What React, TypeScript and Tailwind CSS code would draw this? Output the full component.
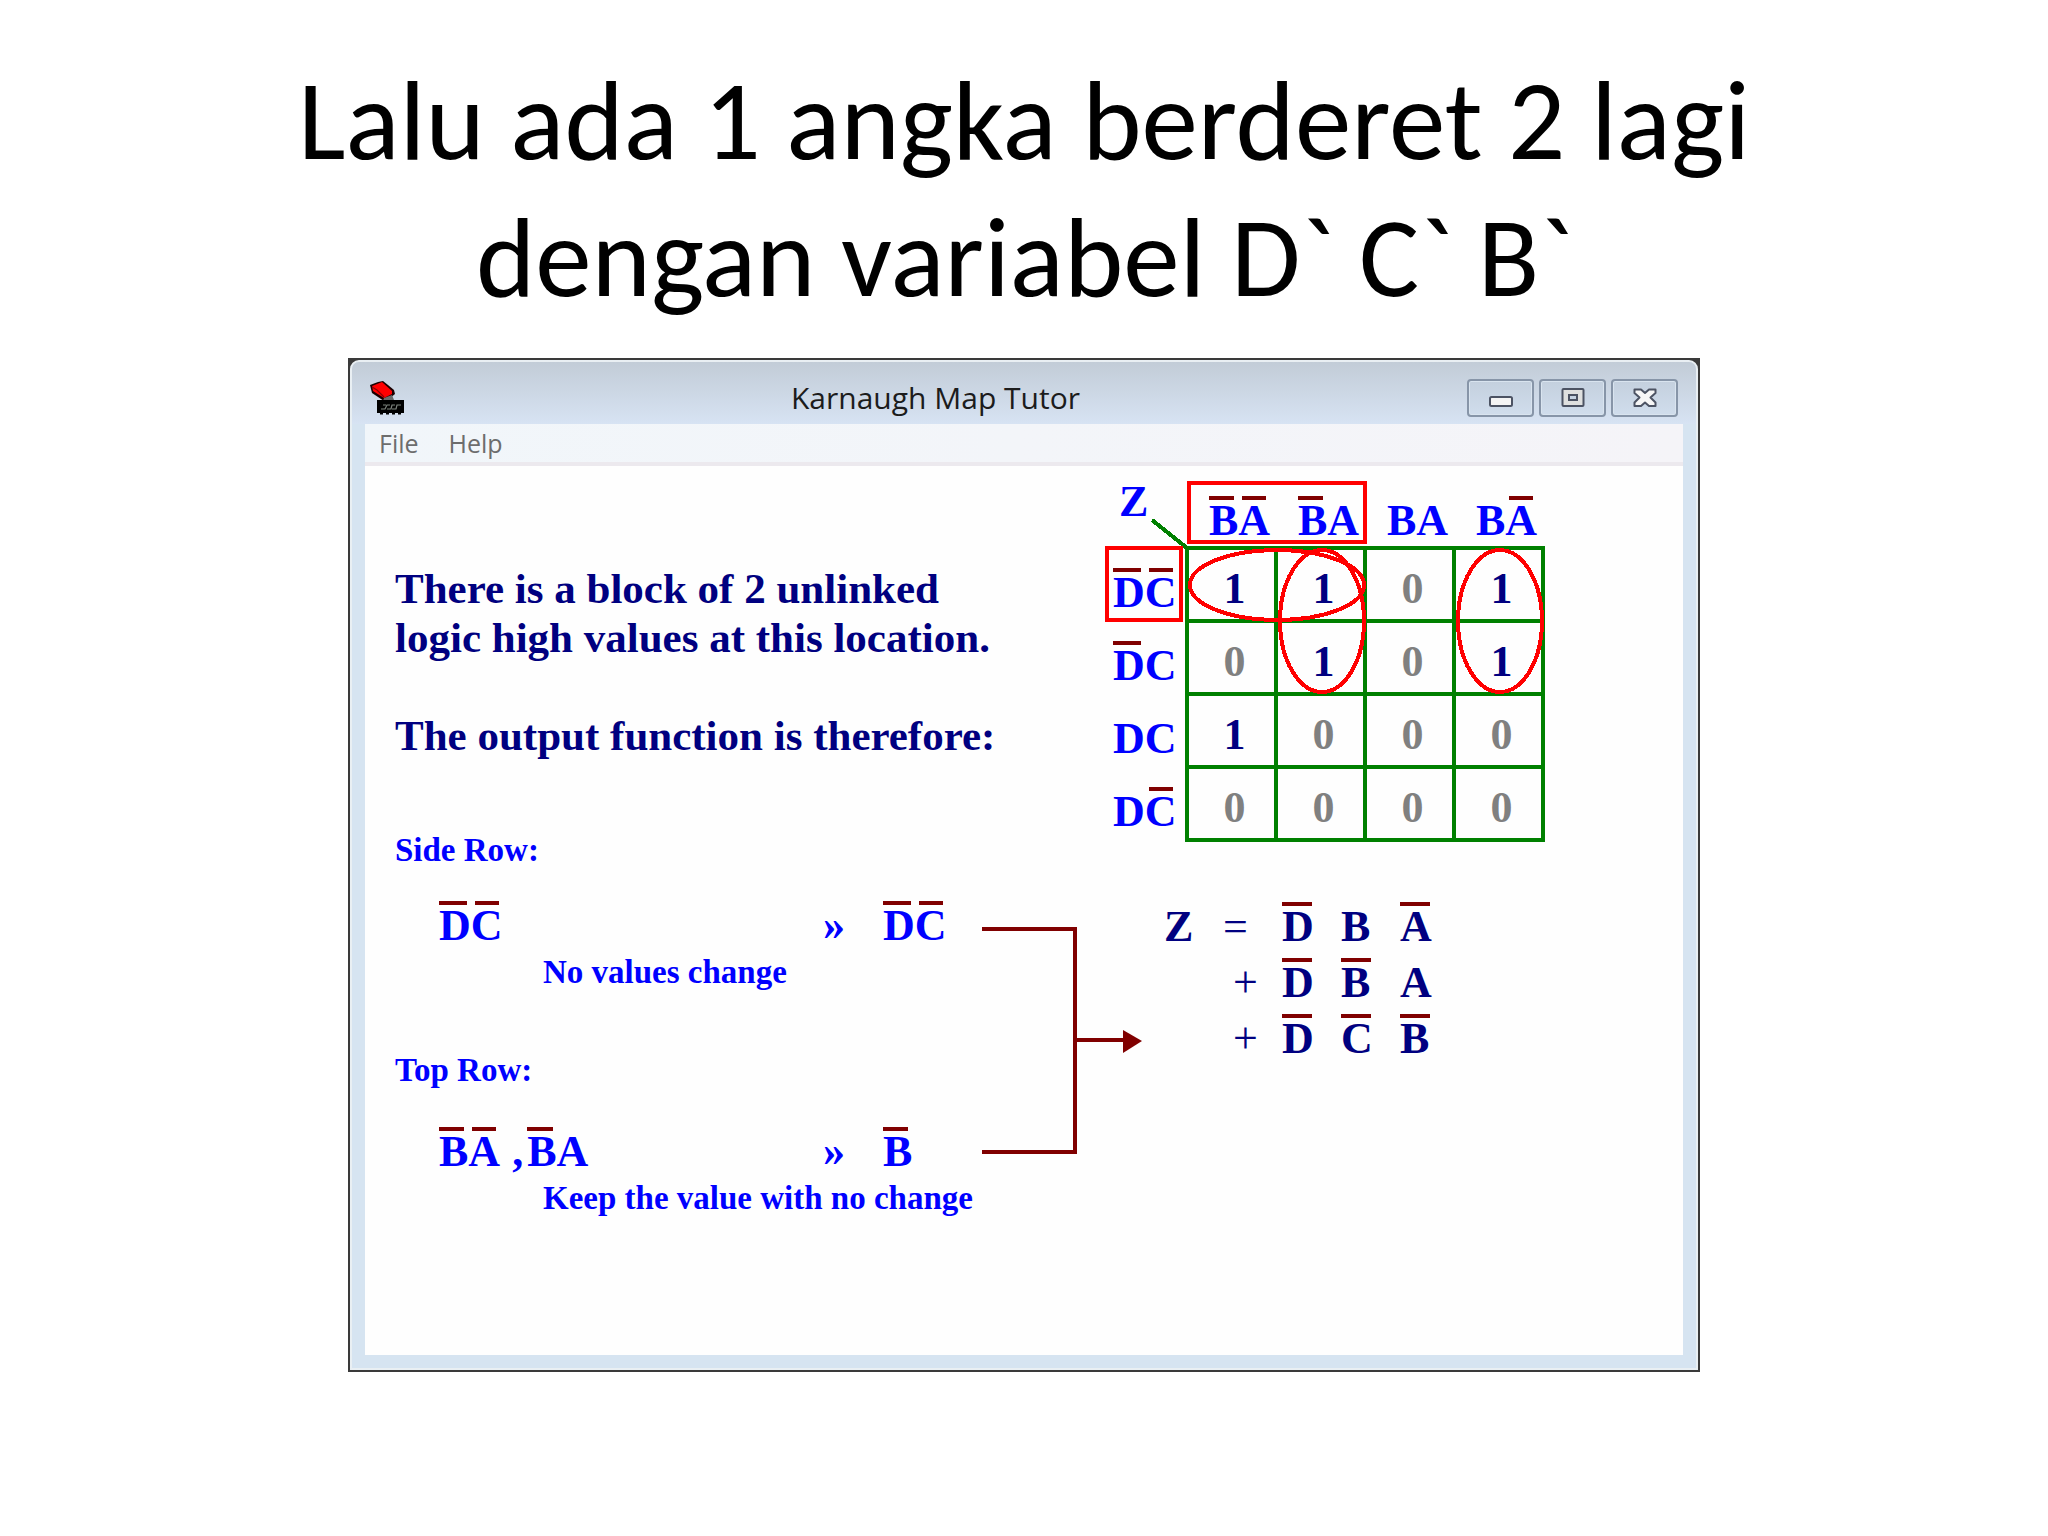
import type { ReactNode } from "react";

type BarKind = "start" | "end" | "full";

const barClasses: Record<BarKind, string> = {
  start: "left-0 right-1",
  end: "left-1 right-1",
  full: "left-0 w-[30px]",
};

/** A variable name; `bar` draws the negation line above it. */
function Letter({ children, bar }: { children: ReactNode; bar?: BarKind }) {
  return (
    <span className="relative inline-block leading-[44px]">
      {children}
      {bar && <span className={`absolute -top-[3px] h-1 bg-[#800000] ${barClasses[bar]}`} />}
    </span>
  );
}

/** Two adjacent variables; `neg` holds which of the two are negated. */
function Pair({ names, neg }: { names: string; neg: [boolean, boolean] }) {
  return (
    <span className="inline-flex">
      <Letter bar={neg[0] ? "start" : undefined}>{names[0]}</Letter>
      <Letter bar={neg[1] ? "end" : undefined}>{names[1]}</Letter>
    </span>
  );
}

type Side = { names: string; neg: [boolean, boolean] };

const columns: Side[] = [
  { names: "BA", neg: [true, true] },
  { names: "BA", neg: [true, false] },
  { names: "BA", neg: [false, false] },
  { names: "BA", neg: [false, true] },
];

const rows: (Side & { values: number[] })[] = [
  { names: "DC", neg: [true, true], values: [1, 1, 0, 1] },
  { names: "DC", neg: [true, false], values: [0, 1, 0, 1] },
  { names: "DC", neg: [false, false], values: [1, 0, 0, 0] },
  { names: "DC", neg: [false, true], values: [0, 0, 0, 0] },
];

const terms: { lead: string; op: string; vars: [string, boolean][] }[] = [
  { lead: "Z", op: "=", vars: [["D", true], ["B", false], ["A", true]] },
  { lead: "", op: "+", vars: [["D", true], ["B", true], ["A", false]] },
  { lead: "", op: "+", vars: [["D", true], ["C", true], ["B", true]] },
];

function AppIcon() {
  return (
    <svg viewBox="0 0 34 34" className="h-[34px] w-[34px] shrink-0" aria-hidden="true">
      <path d="M0 4 L8 1 L13 0 L18 4 L24 9 L25 13 L20 17 L14 20 L8 16 L2 12 Z" fill="#1a0000" />
      <path d="M2 5 L12 1 L22 10 L22 13 L14 17 L3 10 Z" fill="#ff0000" />
      <path d="M2 6 L7 9 L14 16" stroke="#8a0000" strokeWidth="1.2" fill="none" />
      <path d="M14 17 L22 14 L24 19 L13 20 Z" fill="#6b6b6b" />
      <rect x="7" y="19" width="27" height="13" fill="#000" />
      <path d="M10 32 h3 M16 32 h3 M22 32 h3 M28 32 h3" stroke="#000" strokeWidth="3" />
      <path d="M11 28 h4 l2-4 h3 M17 28 h4 l1-4 h3 M22 28 h4 l1-4 h4 M13 24 h3" stroke="#7f857f" strokeWidth="1.2" fill="none" />
    </svg>
  );
}

function CaptionButton({ label, children }: { label: string; children: ReactNode }) {
  return (
    <button
      type="button"
      aria-label={label}
      className="flex h-[38px] w-[67px] items-center justify-center rounded-[4px] border-2 border-[#8795a8] bg-linear-to-b from-[#c4d0de] to-[#d0ddec] shadow-[inset_0_0_0_1px_#d9e4ef]"
    >
      {children}
    </button>
  );
}

function KarnaughMap() {
  return (
    <div className="relative w-fit">
      <table className="border-separate border-spacing-0 text-[44px] leading-[44px] font-bold">
        <thead>
          <tr className="h-[70px] text-[#0000ff]">
            <th className="w-[84px] p-0 pl-3.5 text-left align-top">Z</th>
            {columns.map((c, i) => (
              <th key={i} scope="col" className="w-[89px] border-b-4 border-[#008000] p-0 pb-[3px] pl-5 text-left align-bottom">
                <Pair {...c} />
              </th>
            ))}
          </tr>
        </thead>
        <tbody>
          {rows.map((r, i) => (
            <tr key={i} className="h-[73px]">
              <th scope="row" className="border-r-4 border-[#008000] p-0 pt-3 pl-2 text-left align-middle text-[#0000ff]">
                <Pair names={r.names} neg={r.neg} />
              </th>
              {r.values.map((v, j) => (
                <td
                  key={j}
                  className={`border-r-4 border-b-4 border-[#008000] p-0 pt-2 pl-1.5 text-center align-middle ${v ? "text-[#000080]" : "text-[#808080]"}`}
                >
                  {v}
                </td>
              ))}
            </tr>
          ))}
        </tbody>
      </table>
      <svg
        viewBox="0 0 440 362"
        className="pointer-events-none absolute inset-0 h-full w-full"
        fill="none"
        shapeRendering="crispEdges"
        aria-hidden="true"
      >
        <path d="M47 40 L82 68" stroke="#008000" strokeWidth="4" />
        <rect x="80" y="66" width="4" height="4" fill="#008000" />
        <g stroke="#ff0000" strokeWidth="4">
          <rect x="84" y="3" width="176" height="59" />
          <rect x="2" y="68" width="74" height="72" />
          <ellipse cx="172" cy="105" rx="87" ry="35" />
          <ellipse cx="217" cy="141" rx="42" ry="71" />
          <ellipse cx="395" cy="141" rx="42" ry="71" />
        </g>
      </svg>
    </div>
  );
}

function Connector() {
  return (
    <svg viewBox="0 0 160 227" className="mt-[85px] h-[227px] w-[160px]" aria-hidden="true">
      <path d="M0 2 H93 V225 H0 M93 113 H142" stroke="#800000" strokeWidth="4" fill="none" />
      <path d="M141 103 L160 114 L141 126 Z" fill="#800000" />
    </svg>
  );
}

function Derivation({ from, to }: { from: ReactNode; to: ReactNode }) {
  return (
    <div className="flex pl-11 text-[44px] leading-[44px]">
      <span className="flex w-[384px]">{from}</span>
      <span className="w-[60px]">»</span>
      {to}
    </div>
  );
}

export default function App() {
  return (
    <main className="min-h-screen bg-white px-4 pt-[52px] pb-16">
      <h1 className="text-center font-[Carlito,Calibri,'Open_Sans',sans-serif] text-[113px] leading-[137px] text-black">
        Lalu ada 1 angka berderet 2 lagi
        <br />
        dengan variabel D` C` B`
      </h1>

      <section aria-label="Karnaugh Map Tutor" className="mx-auto mt-8 w-full max-w-[1352px] bg-[#3a3a3a] p-0.5">
        <div className="rounded-t-[9px] border-2 border-[#e9eff3] bg-[#d6e4f1] px-[13px] pb-[13px]">
          <header className="-mx-[13px] flex h-[62px] items-center rounded-t-[7px] bg-linear-to-b from-[#c2ccd7] to-[#d7e3f3] px-[18px] pt-2.5 font-['Open_Sans',sans-serif]">
            <AppIcon />
            <h2 className="flex-1 text-center text-[30px] leading-10 text-[#1c1c1c]">Karnaugh Map Tutor</h2>
            <div className="flex gap-[5px]">
              <CaptionButton label="Minimize">
                <svg viewBox="0 0 24 20" className="h-5 w-6">
                  <rect x="1" y="9" width="22" height="9" rx="1.5" fill="#f4f4f4" stroke="#4c5363" strokeWidth="2" />
                </svg>
              </CaptionButton>
              <CaptionButton label="Maximize">
                <svg viewBox="0 0 24 20" className="h-5 w-6">
                  <rect x="1.5" y="1" width="21" height="17" rx="1" fill="#dfe0df" stroke="#4c5363" strokeWidth="2" />
                  <rect x="8" y="7" width="8" height="5" fill="#c6d3e2" stroke="#4c5363" strokeWidth="2" />
                </svg>
              </CaptionButton>
              <CaptionButton label="Close">
                <svg viewBox="0 0 24 20" className="h-5 w-6" strokeLinejoin="round">
                  <path
                    d="M1.500 1.500 H8 L12 5 L16 1.500 H22.500 V5 L17.500 9.500 L22.500 14.500 V18 H16 L12 14.500 L8 18 H1.500 V14.500 L6.500 9.500 L1.500 5 Z"
                    fill="#f6f6f6"
                    stroke="#4c5363"
                    strokeWidth="2"
                  />
                </svg>
              </CaptionButton>
            </div>
          </header>

          <nav className="flex h-[42px] items-center gap-[30px] border-b-4 border-[#ece9ee] bg-linear-to-r from-[#f1f6fa] to-[#f5f4f8] px-3.5 font-['Open_Sans',sans-serif] text-[25px] leading-8 text-[#6d6d6d]">
            <button type="button">File</button>
            <button type="button">Help</button>
          </nav>

          <div className="grid grid-cols-[617px_160px_1fr] grid-rows-[auto_1fr] bg-[#fefefe] pb-[137px] font-['Liberation_Serif',serif] font-bold">
            <div className="row-span-2 pt-[98px] pl-[30px] text-[#0000ff]">
              <p className="text-[43px] leading-[49px] whitespace-nowrap text-[#000080]">
                There is a block of 2 unlinked
                <br />
                logic high values at this location.
                <br />
                <br />
                The output function is therefore:
              </p>

              <h3 className="mt-[70px] text-[33px] leading-10">Side Row:</h3>
              <div className="mt-[34px]">
                <Derivation
                  from={<Pair names="DC" neg={[true, true]} />}
                  to={<Pair names="DC" neg={[true, true]} />}
                />
              </div>
              <p className="mt-1 pl-[148px] text-[33px] leading-10 whitespace-nowrap">No values change</p>

              <h3 className="mt-[58px] text-[33px] leading-10">Top Row:</h3>
              <div className="mt-10">
                <Derivation
                  from={
                    <>
                      <Pair names="BA" neg={[true, true]} />
                      <span className="mr-1 ml-3">,</span>
                      <Pair names="BA" neg={[true, false]} />
                    </>
                  }
                  to={<Letter bar="start">B</Letter>}
                />
              </div>
              <p className="mt-1 pl-[148px] text-[33px] leading-10 whitespace-nowrap">Keep the value with no change</p>
            </div>

            <div className="col-span-2 pt-3.5 pl-[123px]">
              <KarnaughMap />
            </div>

            <Connector />

            <div className="mt-[63px] flex flex-col gap-3 pl-[22px] text-[44px] leading-[44px] text-[#000080]">
              {terms.map((t, i) => (
                <div key={i} className="grid grid-cols-[repeat(5,59px)]">
                  <span>{t.lead}</span>
                  <span className={t.op === "+" ? "pl-2.5 font-normal" : "font-normal"}>{t.op}</span>
                  {t.vars.map(([name, neg], j) => (
                    <span key={j}>
                      <Letter bar={neg ? "full" : undefined}>{name}</Letter>
                    </span>
                  ))}
                </div>
              ))}
            </div>
          </div>
        </div>
      </section>
    </main>
  );
}
